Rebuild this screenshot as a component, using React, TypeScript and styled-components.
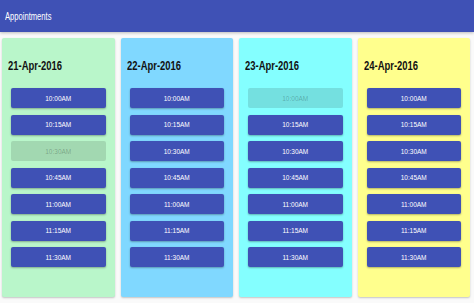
import React from "react";
import styled, { createGlobalStyle } from "styled-components";

const Global = createGlobalStyle`
  html, body { margin: 0; padding: 0; background: #fafafa; }
  body { font-family: "Liberation Sans", Arial, sans-serif; }
  * { box-sizing: border-box; }
`;

const Page = styled.div`
  width: 474px;
  height: 303px;
  overflow: hidden;
  display: flex;
  flex-direction: column;
`;

const Toolbar = styled.header`
  height: 32px;
  flex: none;
  background: #3f51b5;
  color: #fff;
  display: flex;
  align-items: center;
  padding: 0 5px;
  font-size: 10px;
  box-shadow: 0 1px 3px rgba(0, 0, 0, 0.25);
  position: relative;
  z-index: 1;
`;

const Narrow = styled.span<{ $scale: number }>`
  display: inline-block;
  transform: scaleX(${(p) => p.$scale});
  transform-origin: left center;
  white-space: nowrap;
`;

const Grid = styled.main`
  display: grid;
  grid-template-columns: repeat(4, 1fr);
  gap: 6px;
  padding: 6px 4px 0 2px;
`;

const Card = styled.section<{ $bg: string }>`
  background: ${(p) => p.$bg};
  height: 259px;
  border-radius: 2px;
  box-shadow: 0 1px 2px rgba(0, 0, 0, 0.22);
  padding: 20px 9px 0 9px;
  display: flex;
  flex-direction: column;
`;

const Title = styled.h2`
  margin: 0 0 15px -3px;
  font-size: 13.5px;
  line-height: 15px;
  font-weight: bold;
  color: #111;
  white-space: nowrap;
`;

const Slots = styled.div`
  display: flex;
  flex-direction: column;
  gap: 6.5px;
`;

const Slot = styled.button<{ $disabled?: boolean }>`
  height: 20px;
  border: none;
  border-radius: 2px;
  font-family: "Liberation Sans", Arial, sans-serif;
  font-size: 6.5px;
  padding: 0;
  background: ${(p) => (p.$disabled ? "rgba(0,0,0,0.12)" : "#3f51b5")};
  color: ${(p) => (p.$disabled ? "rgba(0,0,0,0.26)" : "#fff")};
  box-shadow: ${(p) =>
    p.$disabled ? "none" : "0 1px 2px rgba(0,0,0,0.3)"};
`;

const times = ["10:00AM", "10:15AM", "10:30AM", "10:45AM", "11:00AM", "11:15AM", "11:30AM"];

const days = [
  { date: "21-Apr-2016", bg: "#b9f6ca", disabled: 2 },
  { date: "22-Apr-2016", bg: "#80d8ff", disabled: -1 },
  { date: "23-Apr-2016", bg: "#84ffff", disabled: 0 },
  { date: "24-Apr-2016", bg: "#ffff8d", disabled: -1 },
];

export default function App() {
  return (
    <Page>
      <Global />
      <Toolbar>
        <Narrow $scale={0.76}>Appointments</Narrow>
      </Toolbar>
      <Grid>
        {days.map((d) => (
          <Card key={d.date} $bg={d.bg}>
            <Title>
              <Narrow $scale={0.7}>{d.date}</Narrow>
            </Title>
            <Slots>
              {times.map((t, i) => (
                <Slot key={t} $disabled={i === d.disabled}>
                  {t}
                </Slot>
              ))}
            </Slots>
          </Card>
        ))}
      </Grid>
    </Page>
  );
}
